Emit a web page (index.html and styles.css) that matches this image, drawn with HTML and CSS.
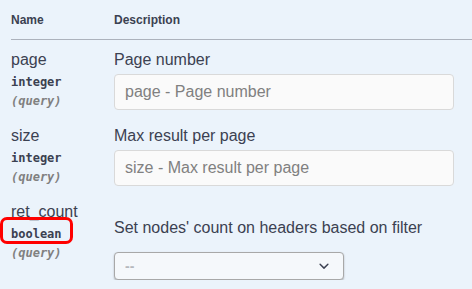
FILE: index.html
```html
<!DOCTYPE html>
<html lang="en">
<head>
    <meta charset="UTF-8">
    <meta name="viewport" content="width=device-width, initial-scale=1.0">
    <title>Parameters</title>
    <link rel="stylesheet" href="styles.css">
</head>
<body>

<div class="parameters-container">
    <table class="parameters">
        <thead>
            <tr>
                <th class="col-name">Name</th>
                <th class="col-desc">Description</th>
            </tr>
        </thead>
        <tbody>
            <tr>
                <td class="col-name">
                    <div class="param-name">page</div>
                    <div class="param-type">integer</div>
                    <div class="param-in">(query)</div>
                </td>
                <td class="col-desc">
                    <p class="param-desc">Page number</p>
                    <input type="text" class="param-input" placeholder="page - Page number">
                </td>
            </tr>
            <tr>
                <td class="col-name">
                    <div class="param-name">size</div>
                    <div class="param-type">integer</div>
                    <div class="param-in">(query)</div>
                </td>
                <td class="col-desc">
                    <p class="param-desc">Max result per page</p>
                    <input type="text" class="param-input" placeholder="size - Max result per page">
                </td>
            </tr>
            <tr>
                <td class="col-name">
                    <div class="param-name">ret_count</div>
                    <div class="param-type"><span class="marked">boolean</span></div>
                    <div class="param-in">(query)</div>
                </td>
                <td class="col-desc">
                    <p class="param-desc markdown">Set nodes' count on headers based on filter</p>
                    <div class="select-wrap">
                        <select class="param-select">
                            <option>--</option>
                            <option>true</option>
                            <option>false</option>
                        </select>
                        <svg class="select-arrow" viewBox="0 0 20 20" width="20" height="20">
                            <path d="M13.418 7.859a.695.695 0 0 1 .978 0 .68.68 0 0 1 0 .969l-3.908 3.83a.697.697 0 0 1-.979 0l-3.908-3.83a.68.68 0 0 1 0-.969.695.695 0 0 1 .978 0L10 11z" fill="#3b4151"/>
                        </svg>
                    </div>
                </td>
            </tr>
        </tbody>
    </table>
</div>

</body>
</html>
```

FILE: styles.css
```css
body {
    margin: 0;
    background-color: #ebf3fb;
    font-family: 'Liberation Sans', Arial, sans-serif;
    color: #3b4151;
}
.parameters-container {
    padding-left: 11px;
}
.parameters {
    width: 100%;
    border-collapse: collapse;
}
.parameters th {
    text-align: left;
    font-size: 12px;
    font-weight: bold;
    line-height: 15px;
    padding: 13px 0 11px 0;
    border-bottom: 1px solid rgba(59, 65, 81, 0.2);
}
.parameters td {
    vertical-align: top;
    padding: 10px 0 0 0;
}
.col-name {
    width: 103px;
}
.param-name {
    font-size: 16px;
    line-height: 20px;
}
.param-type {
    font-family: 'DejaVu Sans Mono', monospace;
    font-size: 12px;
    font-weight: 600;
    line-height: 14px;
    padding: 5px 0;
}
.param-in {
    font-family: 'DejaVu Sans Mono', monospace;
    font-size: 12px;
    font-style: italic;
    font-weight: 600;
    line-height: 14px;
    color: #808080;
}
.marked {
    display: inline-block;
    padding: 7px 8px 0 8px;
    margin: -7px -8px 0 -8px;
    outline: 3px solid #ff0000;
    border-radius: 4px;
}
.param-desc {
    margin: 0;
    font-size: 16px;
    line-height: 20px;
}
.param-desc.markdown {
    margin-top: 16px;
}
.param-input {
    display: block;
    box-sizing: border-box;
    width: 340px;
    height: 36px;
    margin: 4px 0 6px 0;
    padding: 8px 10px;
    border: 1px solid #d9d9d9;
    border-radius: 4px;
    background-color: #fafafa;
    font-family: 'Liberation Sans', Arial, sans-serif;
    font-size: 16px;
    color: #3b4151;
}
.param-input::placeholder {
    color: #808080;
}
.select-wrap {
    display: grid;
    width: 230px;
    margin-top: 14px;
}
.param-select,
.select-arrow {
    grid-area: 1 / 1;
}
.param-select {
    appearance: none;
    box-sizing: border-box;
    width: 230px;
    height: 28px;
    padding: 0 40px 0 10px;
    border: 1px solid #a8a8a8;
    border-radius: 4px;
    box-shadow: 0 1px 2px 0 rgba(0, 0, 0, 0.25);
    background-color: #f5f8fb;
    font-family: 'Liberation Sans', Arial, sans-serif;
    font-size: 14px;
    font-weight: bold;
    color: #b5b8bd;
}
.select-arrow {
    justify-self: end;
    align-self: center;
    margin-right: 10px;
    pointer-events: none;
}
```
